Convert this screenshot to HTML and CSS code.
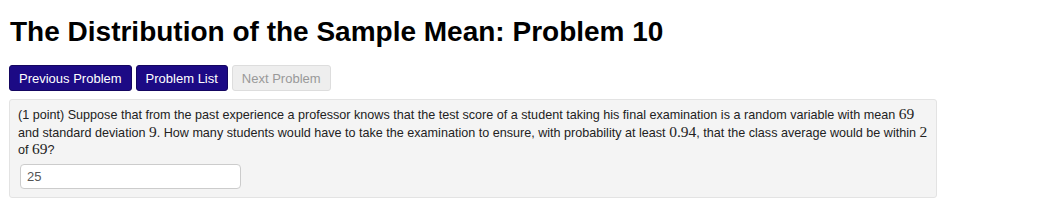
FILE: index.html
```html
<!DOCTYPE html>
<html lang="en">
<head>
    <meta charset="UTF-8">
    <title>The Distribution of the Sample Mean: Problem 10</title>
    <link rel="stylesheet" href="styles.css">
</head>
<body>
    <div class="page">
        <h1>The Distribution of the Sample Mean: Problem 10</h1>

        <div class="nav">
            <button class="nav-button">Previous Problem</button>
            <button class="nav-button">Problem List</button>
            <button class="nav-button" disabled>Next Problem</button>
        </div>

        <div class="problem">
            <p>(1 point) Suppose that from the past experience a professor knows that the test score of a student taking his final examination is a random variable with mean <span class="math">69</span> and standard deviation <span class="math">9</span>. How many students would have to take the examination to ensure, with probability at least <span class="math">0.94</span>, that the class average would be within <span class="math">2</span> of <span class="math">69</span>?</p>
            <input class="answer" type="text" value="25">
        </div>
    </div>
</body>
</html>
```

FILE: styles.css
```css
body {
    font-family: "Liberation Sans", Arial, sans-serif;
    background-color: #fff;
    color: #222;
    margin: 0;
    padding: 0;
}

.page {
    padding: 0 9px;
    width: 930px;
}

h1 {
    font-size: 28px;
    font-weight: bold;
    color: #000;
    margin: 16px 0 0 1px;
    line-height: 32px;
}

.nav {
    display: flex;
    gap: 4px;
    margin-top: 17px;
}

.nav-button {
    font-family: "Liberation Sans", Arial, sans-serif;
    font-size: 13px;
    background-color: #1c0a85;
    color: #fff;
    border: 1px solid #140660;
    border-radius: 3px;
    height: 26px;
    padding: 0 9px;
    cursor: pointer;
}

.nav-button:disabled {
    background-color: #eee;
    color: #999;
    border-color: #ddd;
    cursor: not-allowed;
}

.problem {
    margin-top: 8px;
    background-color: #f4f4f4;
    border: 1px solid #e3e3e3;
    border-radius: 3px;
    padding: 7px 8px 8px;
    width: 910px;
}

.problem p {
    font-size: 12.6px;
    line-height: 17.5px;
    margin: 0 0 4px;
}

.math {
    font-family: "Liberation Serif", "Times New Roman", serif;
    font-size: 15.5px;
    line-height: 0;
}

.answer {
    font-family: "Liberation Sans", Arial, sans-serif;
    font-size: 13px;
    color: #555;
    width: 221px;
    height: 25px;
    padding: 0 6px;
    margin-left: 2px;
    border: 1px solid #ccc;
    border-radius: 4px;
    background-color: #fff;
    box-sizing: border-box;
}
```
